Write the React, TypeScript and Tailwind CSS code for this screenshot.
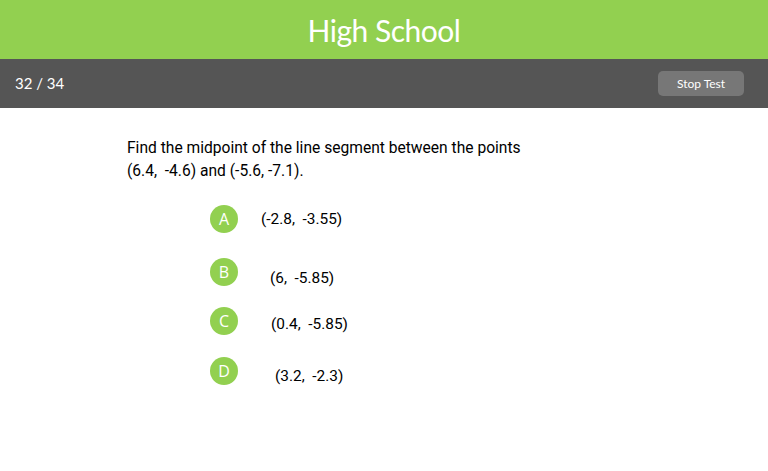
const options = [
  { letter: 'A', text: '(-2.8,  -3.55)', mt: 'mt-[22px]', textPad: 'pl-[23px] pt-0' },
  { letter: 'B', text: '(6,  -5.85)', mt: 'mt-[25px]', textPad: 'pl-[32px] pt-[6px]' },
  { letter: 'C', text: '(0.4,  -5.85)', mt: 'mt-[21px]', textPad: 'pl-[33px] pt-[3px]' },
  { letter: 'D', text: '(3.2,  -2.3)', mt: 'mt-[22px]', textPad: 'pl-[37px] pt-[5px]' },
];

const App = () => {
  return (
    <div className="w-[768px] h-[471px] bg-white overflow-hidden">
      <header className="h-[59px] bg-[#92d050] flex items-center justify-center">
        <h1 className="text-white text-[30px] font-['Lato',sans-serif] tracking-[-0.5px] leading-none">
          High School
        </h1>
      </header>
      <div className="h-[49px] bg-[#555555] flex items-center justify-between pl-[15px] pr-[24px]">
        <span className="text-white text-[15px] font-['Lato',sans-serif]">32 / 34</span>
        <button className="w-[86px] h-[25px] rounded-[5px] bg-[#777777] text-white text-[12px] font-['Lato',sans-serif]">
          Stop Test
        </button>
      </div>
      <main className="pl-[127px] pt-[29px]">
        <p className="text-[15.6px] leading-[23px] text-black font-['Roboto',sans-serif] w-[440px]">
          Find the midpoint of the line segment between the points
          <br />
          (6.4,&nbsp; -4.6) and (-5.6, -7.1).
        </p>
        <ul className="pl-[83px]">
          {options.map((o) => (
            <li key={o.letter} className={`flex items-start h-[28px] ${o.mt}`}>
              <span className="w-[28px] h-[28px] rounded-full bg-[#92d050] text-white flex items-center justify-center text-[16px] font-['Open_Sans',sans-serif] shrink-0">
                {o.letter}
              </span>
              <span className={`text-[15.4px] leading-[28px] text-black font-['Roboto',sans-serif] whitespace-pre ${o.textPad}`}>
                {o.text}
              </span>
            </li>
          ))}
        </ul>
      </main>
    </div>
  );
};

export default App;
